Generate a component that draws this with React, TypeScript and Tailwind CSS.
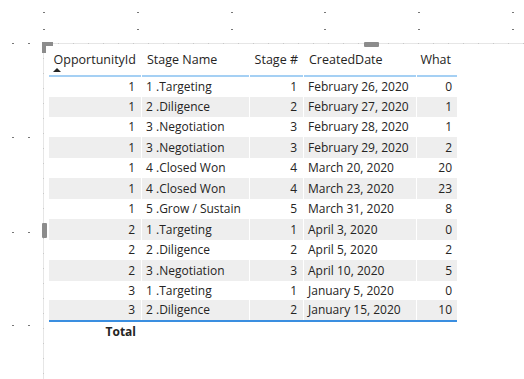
import React from "react";

type Row = { id: number; stage: string; num: number; date: string; what: number; h: string };

const rows: Row[] = [
  { id: 1, stage: "1 .Targeting", num: 1, date: "February 26, 2020", what: 0, h: "h-[20px]" },
  { id: 1, stage: "2 .Diligence", num: 2, date: "February 27, 2020", what: 1, h: "h-[20px]" },
  { id: 1, stage: "3 .Negotiation", num: 3, date: "February 28, 2020", what: 1, h: "h-[20px]" },
  { id: 1, stage: "3 .Negotiation", num: 3, date: "February 29, 2020", what: 2, h: "h-[21px]" },
  { id: 1, stage: "4 .Closed Won", num: 4, date: "March 20, 2020", what: 20, h: "h-[20px]" },
  { id: 1, stage: "4 .Closed Won", num: 4, date: "March 23, 2020", what: 23, h: "h-[21px]" },
  { id: 1, stage: "5 .Grow / Sustain", num: 5, date: "March 31, 2020", what: 8, h: "h-[20px]" },
  { id: 2, stage: "1 .Targeting", num: 1, date: "April 3, 2020", what: 0, h: "h-[21px]" },
  { id: 2, stage: "2 .Diligence", num: 2, date: "April 5, 2020", what: 2, h: "h-[20px]" },
  { id: 2, stage: "3 .Negotiation", num: 3, date: "April 10, 2020", what: 5, h: "h-[21px]" },
  { id: 3, stage: "1 .Targeting", num: 1, date: "January 5, 2020", what: 0, h: "h-[19px]" },
  { id: 3, stage: "2 .Diligence", num: 2, date: "January 15, 2020", what: 10, h: "h-[20px]" },
];

const topDots = [43, 137, 231, 324, 418, 512];
const sideDots = [43, 137, 232, 325];

export default function App() {
  return (
    <div
      className="relative w-[524px] h-[379px] bg-white overflow-hidden text-[12px] text-[#252423]"
      style={{ fontFamily: '"Segoe UI", "Open Sans", sans-serif' }}
    >
      {/* canvas grid dots */}
      {topDots.map((x) => (
        <React.Fragment key={"t" + x}>
          <div className="absolute w-[2px] h-[1px] bg-[#777777]" style={{ left: x, top: 12 }} />
          <div className="absolute w-[2px] h-[1px] bg-[#777777]" style={{ left: x, top: 29 }} />
        </React.Fragment>
      ))}
      {sideDots.map((y) => (
        <React.Fragment key={"s" + y}>
          <div className="absolute w-[2px] h-[1px] bg-[#777777]" style={{ left: 12, top: y }} />
          <div className="absolute w-[2px] h-[1px] bg-[#777777]" style={{ left: 28, top: y }} />
        </React.Fragment>
      ))}

      {/* visual container */}
      <div className="absolute left-[43px] top-[43px] w-[500px] h-[360px]">
        {/* borders */}
        <div className="absolute left-0 top-0 right-0 h-[1px] bg-[repeating-linear-gradient(90deg,#c8c8c8_0px,#c8c8c8_1px,#e6e6e6_1px,#e6e6e6_15px)]" />
        <div className="absolute left-0 top-0 bottom-0 w-[1px] bg-[repeating-linear-gradient(180deg,#c8c8c8_0px,#c8c8c8_1px,#e6e6e6_1px,#e6e6e6_15px)]" />
        {/* handles */}
        <div className="absolute left-[-1px] top-[-1px] w-[11px] h-[4px] bg-[#8c8c8c]" />
        <div className="absolute left-[-1px] top-[-1px] w-[4px] h-[11px] bg-[#8c8c8c]" />
        <div className="absolute left-[321px] top-[-1px] w-[15px] h-[5px] rounded-[1px] bg-[#8c8c8c]" />
        <div className="absolute left-[-1px] top-[180px] w-[5px] h-[15px] rounded-[1px] bg-[#8c8c8c]" />

        {/* table */}
        <div className="relative ml-[6px] mt-[1px] w-[408px] flex flex-col">
          {/* header */}
          <div className="flex h-[33px]">
            <div className="w-[93px] border-r border-white">
              <div className="h-[31px] flex flex-col items-end pr-[5px] pt-[7px]">
                <span className="leading-[17px] text-[12.5px]">OpportunityId</span>
                <svg className="self-start ml-[4px] mt-[0px]" width="8" height="4" viewBox="0 0 8 4">
                  <polygon points="0,4 4,0 8,4" fill="#252423" />
                </svg>
              </div>
              <div className="h-[2px] bg-[#a5d0f4]" />
            </div>
            <div className="w-[108px] border-r border-white">
              <div className="h-[31px] pl-[5px] pt-[7px] leading-[17px] text-[12.5px]">Stage Name</div>
              <div className="h-[2px] bg-[#a5d0f4]" />
            </div>
            <div className="w-[54px] border-r border-white">
              <div className="h-[31px] pr-[5px] pt-[7px] leading-[17px] text-right text-[12.5px]">Stage #</div>
              <div className="h-[2px] bg-[#a5d0f4]" />
            </div>
            <div className="w-[113px] border-r border-white">
              <div className="h-[31px] pl-[5px] pt-[7px] leading-[17px] text-[12.5px]">CreatedDate</div>
              <div className="h-[2px] bg-[#a5d0f4]" />
            </div>
            <div className="w-[40px]">
              <div className="h-[31px] pr-[6px] pt-[7px] leading-[17px] text-right text-[12.5px]">What</div>
              <div className="h-[2px] bg-[#a5d0f4]" />
            </div>
          </div>

          {/* body */}
          {rows.map((r, i) => {
            const bg = i % 2 === 1 ? "bg-[#eeeeee]" : "bg-white";
            return (
              <div key={i} className={"flex " + r.h}>
                <div className={"w-[93px] border-r border-white flex items-center justify-end pr-[6px] " + bg}>{r.id}</div>
                <div className={"w-[108px] border-r border-white flex items-center pl-[4px] " + bg}>{r.stage}</div>
                <div className={"w-[54px] border-r border-white flex items-center justify-end pr-[6px] " + bg}>{r.num}</div>
                <div className={"w-[113px] border-r border-white flex items-center pl-[4px] " + bg}>{r.date}</div>
                <div className={"w-[40px] flex items-center justify-end pr-[5px] " + bg}>{r.what}</div>
              </div>
            );
          })}
          <div className="h-[2px] bg-[#3a8ee0]" />
          {/* total */}
          <div className="flex h-[20px]">
            <div className="w-[93px] flex items-center justify-end pr-[6px] font-bold">Total</div>
          </div>
        </div>
      </div>
    </div>
  );
}
